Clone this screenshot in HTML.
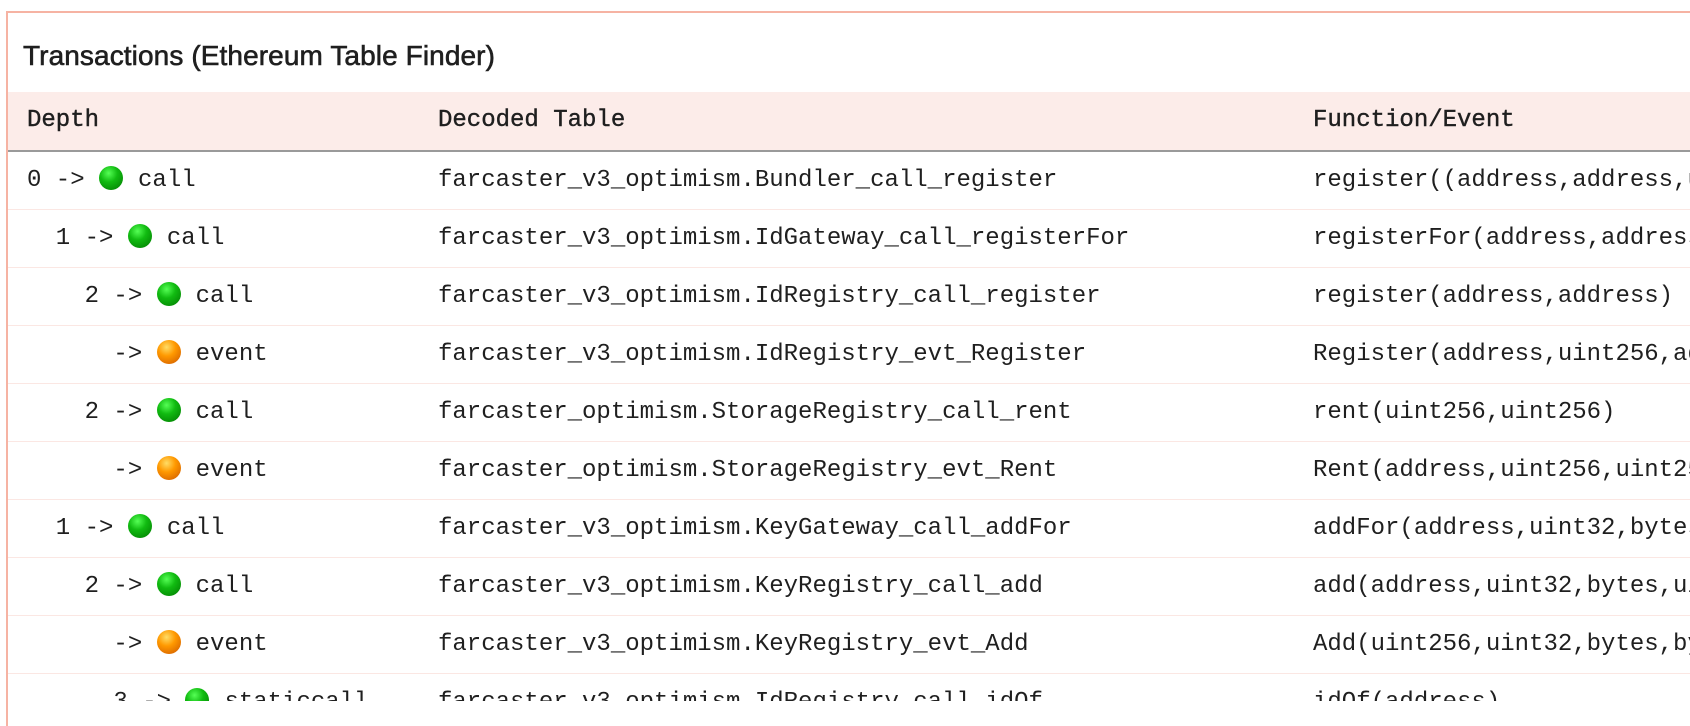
<!DOCTYPE html>
<html style="height:726px;overflow:hidden"><head><style>
body{margin:0;width:1690px;height:726px;overflow:hidden;background:#fff;font-family:"Liberation Sans",sans-serif;color:#1f1f1f;position:relative}
.card{position:absolute;left:6px;top:11px;width:1684px;height:715px;border:2px solid #f6b3a3;border-right:none;border-bottom:none;box-sizing:border-box;overflow:hidden}
.title{position:absolute;left:15px;top:27px;font-size:28px;letter-spacing:0.1px;-webkit-text-stroke:0.6px #1f1f1f}
.tbl{position:absolute;left:0;top:79px;width:1682px;height:609px;overflow:hidden}
.hd{height:58px;background:#fcece9;border-bottom:2px solid #9a9a9a;position:relative}
.row{height:57px;border-bottom:1.5px solid #fbe7e3;position:relative}
.c{position:absolute;top:0;line-height:58px;font-family:"Liberation Mono",monospace;font-size:24px;white-space:pre}
.hd .c{-webkit-text-stroke:0.4px #1f1f1f}
.c1{left:19px}.c2{left:430px}.c3{left:1305px}
.d{display:inline-block;width:24px;height:24px;border-radius:50%;vertical-align:-4px;margin-right:15px}
.g{background:radial-gradient(circle at 40% 30%,#5f5 0,#1b1 40%,#070 100%)}
.o{background:radial-gradient(circle at 40% 30%,#fd6 0,#f90 40%,#c50 100%)}
</style></head><body>
<div class="card">
<div class="title">Transactions (Ethereum Table Finder)</div>
<div class="tbl">
<div class="hd"><span class="c c1">Depth</span><span class="c c2">Decoded Table</span><span class="c c3">Function/Event</span></div>
<div class="row"><span class="c c1">0 -> <span class="d g"></span>call</span><span class="c c2">farcaster_v3_optimism.Bundler_call_register</span><span class="c c3">register((address,address,uint256),(</span></div>
<div class="row"><span class="c c1">  1 -> <span class="d g"></span>call</span><span class="c c2">farcaster_v3_optimism.IdGateway_call_registerFor</span><span class="c c3">registerFor(address,address,uint</span></div>
<div class="row"><span class="c c1">    2 -> <span class="d g"></span>call</span><span class="c c2">farcaster_v3_optimism.IdRegistry_call_register</span><span class="c c3">register(address,address)</span></div>
<div class="row"><span class="c c1">      -> <span class="d o"></span>event</span><span class="c c2">farcaster_v3_optimism.IdRegistry_evt_Register</span><span class="c c3">Register(address,uint256,address)</span></div>
<div class="row"><span class="c c1">    2 -> <span class="d g"></span>call</span><span class="c c2">farcaster_optimism.StorageRegistry_call_rent</span><span class="c c3">rent(uint256,uint256)</span></div>
<div class="row"><span class="c c1">      -> <span class="d o"></span>event</span><span class="c c2">farcaster_optimism.StorageRegistry_evt_Rent</span><span class="c c3">Rent(address,uint256,uint256)</span></div>
<div class="row"><span class="c c1">  1 -> <span class="d g"></span>call</span><span class="c c2">farcaster_v3_optimism.KeyGateway_call_addFor</span><span class="c c3">addFor(address,uint32,bytes,uint8</span></div>
<div class="row"><span class="c c1">    2 -> <span class="d g"></span>call</span><span class="c c2">farcaster_v3_optimism.KeyRegistry_call_add</span><span class="c c3">add(address,uint32,bytes,uint8,bytes)</span></div>
<div class="row"><span class="c c1">      -> <span class="d o"></span>event</span><span class="c c2">farcaster_v3_optimism.KeyRegistry_evt_Add</span><span class="c c3">Add(uint256,uint32,bytes,bytes,uint8)</span></div>
<div class="row"><span class="c c1">      3 -> <span class="d g"></span>staticcall</span><span class="c c2">farcaster_v3_optimism.IdRegistry_call_idOf</span><span class="c c3">idOf(address)</span></div>
</div>
</div>
</body></html>
